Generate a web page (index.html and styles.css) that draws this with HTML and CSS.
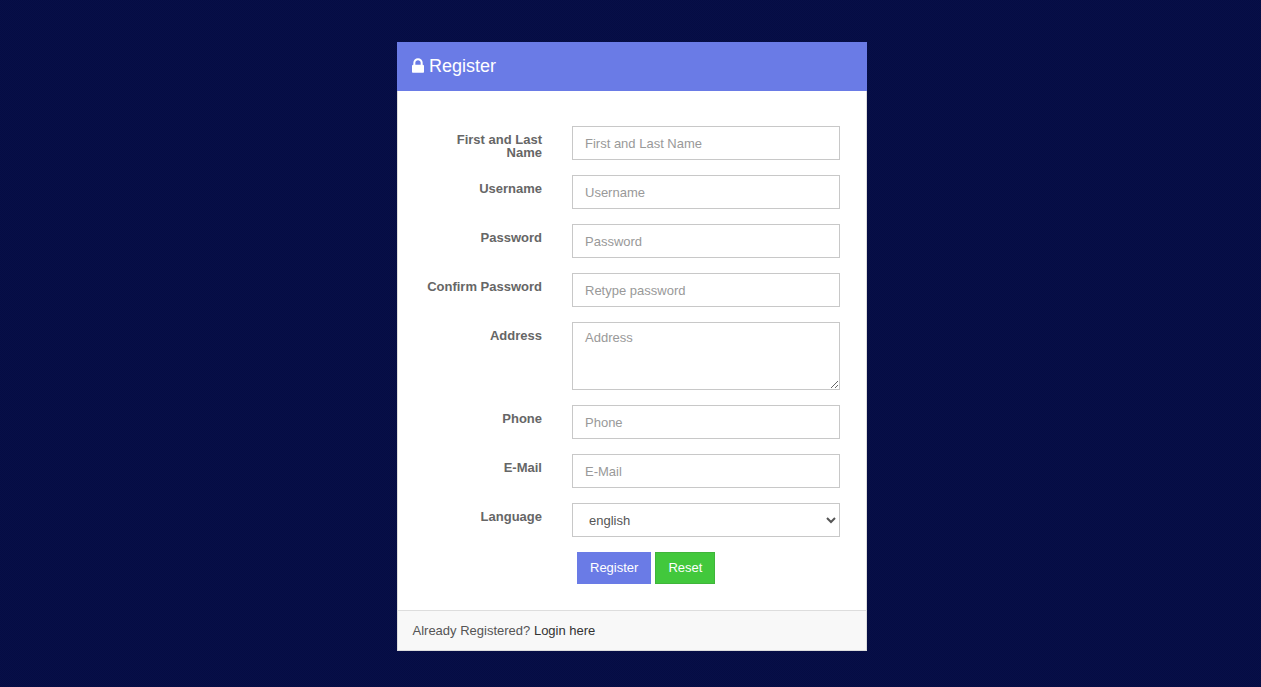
FILE: index.html
```html
<!DOCTYPE html>
<html lang="en">
<head>
    <meta charset="UTF-8">
    <meta name="viewport" content="width=device-width, initial-scale=1.0">
    <title>Register</title>
    <link rel="stylesheet" href="styles.css">
</head>
<body>

<div class="card">
    <div class="card-header">
        <svg class="lock" viewBox="320 128 1152 1408" width="12" height="15" aria-hidden="true">
            <path d="M640 768h512v-192q0-106-75-181t-181-75-181 75-75 181v192zm832 96v576q0 40-28 68t-68 28h-960q-40 0-68-28t-28-68v-576q0-40 28-68t68-28h32v-192q0-184 132-316t316-132 316 132 132 316v192h32q40 0 68 28t28 68z" fill="#fff"/>
        </svg>
        <span>Register</span>
    </div>

    <form class="card-body">
        <div class="row">
            <label>First and Last Name</label>
            <input type="text" placeholder="First and Last Name">
        </div>
        <div class="row">
            <label>Username</label>
            <input type="text" placeholder="Username">
        </div>
        <div class="row">
            <label>Password</label>
            <input type="password" placeholder="Password">
        </div>
        <div class="row">
            <label>Confirm Password</label>
            <input type="password" placeholder="Retype password">
        </div>
        <div class="row">
            <label>Address</label>
            <textarea placeholder="Address"></textarea>
        </div>
        <div class="row">
            <label>Phone</label>
            <input type="text" placeholder="Phone">
        </div>
        <div class="row">
            <label>E-Mail</label>
            <input type="text" placeholder="E-Mail">
        </div>
        <div class="row">
            <label>Language</label>
            <select>
                <option>english</option>
            </select>
        </div>
        <div class="buttons">
            <button type="submit" class="btn btn-register">Register</button>
            <button type="reset" class="btn btn-reset">Reset</button>
        </div>
    </form>

    <div class="card-footer">
        Already Registered? <a href="#">Login here</a>
    </div>
</div>

</body>
</html>
```

FILE: styles.css
```css
* {
    box-sizing: border-box;
}
body {
    margin: 0;
    padding: 42px 0 36px 3px;
    background: conic-gradient(#070f48 25%, #050c43 0 50%, #070f48 0 75%, #050c43 0) 0 0 / 2px 2px;
    font-family: "Liberation Sans", Arial, sans-serif;
    font-size: 13px;
    color: #555;
    display: flex;
    justify-content: center;
}
.card {
    width: 470px;
    height: 609px;
    background: #fff;
    border: 1px solid #ddd;
    border-top: 0;
}
.card-header {
    height: 49px;
    margin: 0 -1px;
    padding: 0 15px;
    background: #6a7be6;
    color: #fff;
    font-size: 18px;
    display: flex;
    align-items: center;
    gap: 5px;
}
.lock {
    margin-top: -3px;
}
.card-body {
    padding: 35px 26px 26px 0;
}
.row {
    display: flex;
    gap: 30px;
    margin-bottom: 15px;
}
.row label {
    width: 144px;
    padding: 7px 0 0 24px;
    line-height: 13px;
    font-weight: bold;
    color: #666;
    text-align: right;
    flex: none;
}
input, textarea, select {
    width: 268px;
    height: 34px;
    padding: 6px 12px;
    border: 1px solid #c8c8c8;
    border-radius: 0;
    background: #fff;
    color: #555;
    font-family: inherit;
    font-size: 13px;
}
textarea {
    height: 68px;
    padding-top: 7px;
    display: block;
}
::placeholder {
    color: #999;
    opacity: 1;
}
.buttons {
    display: flex;
    gap: 4px;
    padding-left: 179px;
}
.btn {
    height: 32px;
    padding: 0 12px 2px;
    border: 1px solid transparent;
    border-radius: 0;
    color: #fff;
    font-family: inherit;
    font-size: 13px;
}
.btn-register {
    background: #6a7be6;
}
.btn-reset {
    background: #42c83c;
    border-color: #3fb53a;
}
.card-footer {
    height: 40px;
    padding: 0 14.5px;
    background: #f8f8f8;
    border-top: 1px solid #ddd;
    line-height: 39px;
}
.card-footer a {
    color: #333;
    text-decoration: none;
}
```
